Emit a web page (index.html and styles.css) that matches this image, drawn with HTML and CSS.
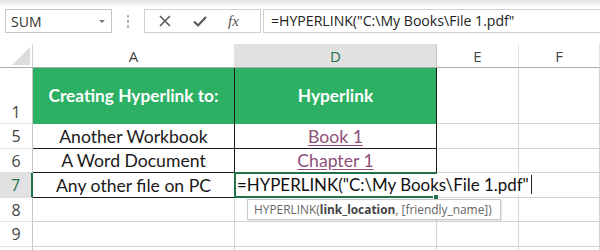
FILE: index.html
```html
<!DOCTYPE html>
<html>
<head>
<meta charset="utf-8">
<link rel="stylesheet" href="styles.css">
</head>
<body>
<div class="app">
  <div class="topfade"></div>
  <div class="fbar">
    <div class="namebox"><span>SUM</span><span class="caret"></span></div>
    <div class="dots"><i></i><i></i><i></i></div>
    <div class="btns">
      <svg class="ic" width="14" height="14" viewBox="0 0 14 14"><path d="M2 2L12 12M12 2L2 12" stroke="#5a5a5a" stroke-width="1.6" fill="none"/></svg>
      <svg class="ic" width="16" height="14" viewBox="0 0 16 14"><path d="M2 7.5L6 11.5L14 3" stroke="#5a5a5a" stroke-width="2.2" fill="none"/></svg>
      <span class="fx">fx</span>
    </div>
    <div class="formula">=HYPERLINK("C:\My Books\File 1.pdf"</div>
  </div>
  <div class="sheet">
    <div class="corner"><span class="tri"></span></div>
    <div class="ch">A</div>
    <div class="ch sel">D</div>
    <div class="ch">E</div>
    <div class="ch">F</div>

    <div class="rh bottom">1</div>
    <div class="c green bl">Creating Hyperlink to:</div>
    <div class="c green br">Hyperlink</div>
    <div class="c"></div>
    <div class="c"></div>

    <div class="rh">5</div>
    <div class="c t bl bb">Another Workbook</div>
    <div class="c t br bb"><span class="link">Book 1</span></div>
    <div class="c"></div>
    <div class="c"></div>

    <div class="rh">6</div>
    <div class="c t bl bb">A Word Document</div>
    <div class="c t br bb"><span class="link">Chapter 1</span></div>
    <div class="c"></div>
    <div class="c"></div>

    <div class="rh sel">7</div>
    <div class="c t bl bb">Any other file on PC</div>
    <div class="c t active">
      <div class="editor">=HYPERLINK("C:\My Books\File 1.pdf"<span class="cursor"></span></div>
      <span class="handle"></span>
      <div class="tip">HYPERLINK(<b>link_location</b>, [friendly_name])</div>
    </div>
    <div class="c"></div>
    <div class="c"></div>

    <div class="rh">8</div>
    <div class="c"></div>
    <div class="c"></div>
    <div class="c"></div>
    <div class="c"></div>

    <div class="rh">9</div>
    <div class="c"></div>
    <div class="c"></div>
    <div class="c"></div>
    <div class="c"></div>

    <div class="rh"></div>
    <div class="c"></div>
    <div class="c"></div>
    <div class="c"></div>
    <div class="c"></div>
  </div>
</div>
</body>
</html>
```
FILE: styles.css
```css
* { box-sizing: border-box; }
html, body { margin: 0; padding: 0; }
body {
  width: 600px;
  height: 250px;
  overflow: hidden;
  background: #fff;
  font-family: Lato, "Open Sans", sans-serif;
  color: #222;
}
.app { position: relative; width: 600px; height: 250px; overflow: hidden; }
.topfade {
  position: absolute; left: 0; top: 0; width: 600px; height: 7px;
  background: linear-gradient(#e2e2e2, #ffffff);
}
.fbar {
  display: flex;
  align-items: flex-start;
  height: 44px;
  padding: 9px 0 0 5px;
}
.namebox {
  width: 107px; height: 24px;
  border: 1px solid #c6c6c6;
  background: #fff;
  display: flex; align-items: center; justify-content: space-between;
  padding: 0 6px 0 5px;
  font-family: "Open Sans", sans-serif;
  font-size: 14px;
  color: #333;
  position: relative;
  z-index: 1;
}
.caret {
  width: 0; height: 0;
  border-left: 3px solid transparent;
  border-right: 3px solid transparent;
  border-top: 3px solid #777;
}
.dots {
  width: 32px; height: 24px;
  display: flex; flex-direction: column; align-items: center; justify-content: center; gap: 2px;
}
.dots i { display: block; width: 2px; height: 3px; background: #b5b5b5; }
.btns {
  width: 117px; height: 24px;
  border: 1px solid #d0d0d0;
  background: #fff;
  display: flex; align-items: center;
  padding-left: 13px;
  gap: 20px;
  position: relative; z-index: 1;
}
.fx {
  font-family: "Liberation Serif", serif;
  font-style: italic;
  font-size: 15px;
  color: #555;
}
.formula {
  flex: 1;
  margin-left: 2px;
  height: 24px;
  border: 1px solid #d0d0d0;
  border-right: none;
  background: #fff;
  padding-left: 7px;
  font-family: "Open Sans", sans-serif;
  font-size: 14.1px;
  line-height: 22px;
  color: #222;
  position: relative; z-index: 1;
}
.sheet {
  display: grid;
  grid-template-columns: 33px 202px 202px 82px 81px;
  grid-template-rows: 24px 56px 25px 24px 25px 24px 25px 24px;
}
.corner {
  border-right: 1px solid #d4d4d4;
  border-bottom: 1px solid #ababab;
  position: relative;
}
.tri {
  position: absolute; right: 2px; bottom: 2px;
  width: 0; height: 0;
  border-left: 18px solid transparent;
  border-bottom: 18px solid #dcdcdc;
}
.ch {
  border-right: 1px solid #e1e1e1;
  border-bottom: 1px solid #ababab;
  display: flex; align-items: center; justify-content: center;
  font-family: "Open Sans", sans-serif;
  font-size: 15px;
  color: #444;
  padding-top: 1px;
}
.ch.sel { background: #e1e1e1; color: #217346; border-right-color: #c6c6c6; }
.rh {
  border-right: 1px solid #c6c6c6;
  border-bottom: 1px solid #e1e1e1;
  display: flex; align-items: center; justify-content: center;
  font-family: "Open Sans", sans-serif;
  font-size: 16px;
  color: #444;
}
.rh.bottom { align-items: flex-end; }
.rh.sel { background: #e1e1e1; color: #217346; border-right: 2px solid #217346; }
.c {
  border-right: 1px solid #d4d4d4;
  border-bottom: 1px solid #d4d4d4;
  display: flex; align-items: center; justify-content: center;
  font-size: 17.6px;
  color: #1a1a1a;
  position: relative;
}
.green {
  background: #2bb064;
  color: #fff;
  font-weight: bold;
  font-size: 17.3px;
  border-bottom-color: #2bb064;
}
.green.bl, .green.br, .t.bl, .t.br { border-right: 1px solid #1a1a1a; }
.t.bb { border-bottom: 1px solid #1a1a1a; }
.link {
  color: #8e4f78;
  text-decoration: underline;
  text-underline-offset: 2px;
}
.active {
  border: 2px solid #217346;
  margin-left: -1px;
  margin-top: -1px;
  justify-content: flex-start;
  z-index: 2;
}
.editor {
  position: absolute;
  left: 1px; top: 0px;
  height: 21px;
  width: 296px;
  background: #fff;
  white-space: nowrap;
  font-size: 16.9px;
  line-height: 21px;
  color: #111;
  display: flex; align-items: center;
}
.cursor {
  display: inline-block;
  width: 1px; height: 19px;
  background: #222;
  margin-left: 2px;
}
.handle {
  position: absolute;
  right: -4px; bottom: -4px;
  width: 6px; height: 6px;
  background: #217346;
  border: 1px solid #fff;
  z-index: 3;
}
.tip {
  position: absolute;
  left: 11px; top: 25px;
  width: 254px; height: 21px;
  background: #fff;
  border: 1px solid #c8c8c8;
  box-shadow: 1px 1px 1px rgba(0,0,0,0.08);
  font-family: "Open Sans", sans-serif;
  font-size: 11.9px;
  color: #666;
  line-height: 19px;
  padding-left: 6px;
  white-space: nowrap;
  z-index: 4;
}
.tip b { color: #444; }
```
